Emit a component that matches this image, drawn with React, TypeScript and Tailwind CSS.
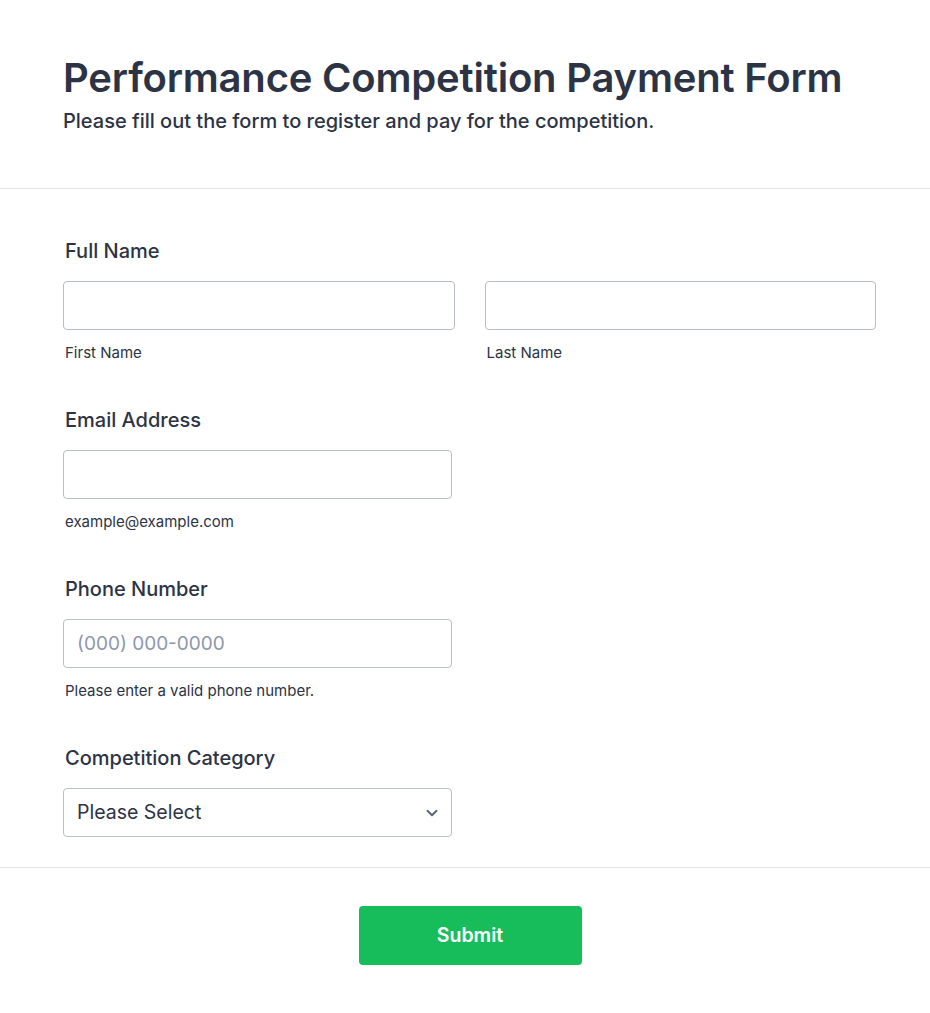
import { ChevronDown } from 'lucide-react';

function Label({ children }: { children: React.ReactNode }) {
    return <label className="block pl-[2px] text-[20px] font-medium leading-[28px] text-[#2c3345]">{children}</label>;
}

function Sub({ children }: { children: React.ReactNode }) {
    return <div className="mt-[13px] pl-[2px] text-[15px] leading-[20px] text-[#2c3345]">{children}</div>;
}

export default function App() {
    return (
        <div className="min-h-[1013px] bg-white font-['Inter',sans-serif] text-[#2c3345]">
            {/* header */}
            <div className="border-b border-[#e3e5ea] px-[63px] pt-[52px] pb-[53px]">
                <h1 className="text-[40px] font-semibold leading-[52px] tracking-[-0.2px]">Performance Competition Payment Form</h1>
                <p className="mt-[3px] text-[20px] font-medium leading-[28px]">Please fill out the form to register and pay for the competition.</p>
            </div>

            <div className="px-[63px] pt-[48px] pb-[30px]">
                {/* full name */}
                <Label>Full Name</Label>
                <div className="mt-[16px] grid grid-cols-2 gap-[30px] w-[813px]">
                    <div>
                        <input className="block h-[49px] w-full rounded-[4px] border border-[#b8bdc9] px-[14px] outline-none" />
                        <Sub>First Name</Sub>
                    </div>
                    <div>
                        <input className="block h-[49px] w-full rounded-[4px] border border-[#b8bdc9] px-[14px] outline-none" />
                        <Sub>Last Name</Sub>
                    </div>
                </div>

                {/* email */}
                <div className="mt-[43px]">
                    <Label>Email Address</Label>
                    <input className="mt-[16px] block h-[49px] w-[389px] rounded-[4px] border border-[#b8bdc9] px-[14px] outline-none" />
                    <Sub>example@example.com</Sub>
                </div>

                {/* phone */}
                <div className="mt-[43px]">
                    <Label>Phone Number</Label>
                    <input
                        placeholder="(000) 000-0000"
                        className="mt-[16px] block h-[49px] w-[389px] rounded-[4px] border border-[#b8bdc9] px-[13px] text-[19px] outline-none placeholder:text-[#8d97ac]"
                    />
                    <Sub>Please enter a valid phone number.</Sub>
                </div>

                {/* category */}
                <div className="mt-[43px]">
                    <Label>Competition Category</Label>
                    <div className="relative mt-[16px] flex h-[49px] w-[389px] items-center rounded-[4px] border border-[#b8bdc9] px-[13px]">
                        <span className="text-[19.5px] text-[#2c3345]">Please Select</span>
                        <ChevronDown className="absolute right-[10px] h-[18px] w-[18px] text-[#57647e]" strokeWidth={2.5} />
                    </div>
                </div>
            </div>

            {/* footer */}
            <div className="flex justify-center border-t border-[#e3e5ea] pl-[10px] pt-[38px]">
                <button className="h-[59px] w-[223px] rounded-[4px] bg-[#18bd5b] text-[19.5px] font-semibold text-white">Submit</button>
            </div>
        </div>
    );
}
